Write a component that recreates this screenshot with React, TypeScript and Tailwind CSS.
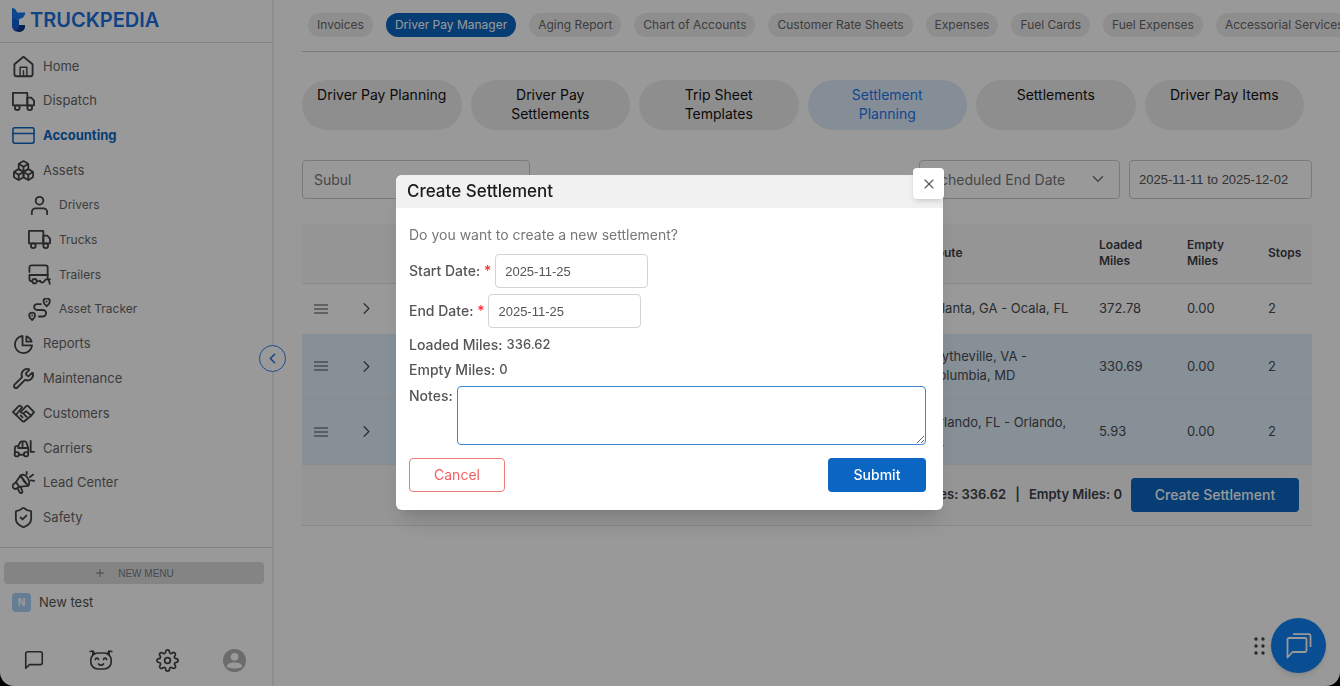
import React from 'react'
import { Boxes, ChevronDown, ChevronLeft, ChevronRight, Plus, ShieldCheck, Wrench, X } from 'lucide-react'
import { FiCreditCard, FiMessageSquare, FiSettings, FiTruck, FiUser } from 'react-icons/fi'
import { HiOutlineChartPie } from 'react-icons/hi'

type IconProps = { className?: string }

const strokeProps = {
  viewBox: '0 0 24 24',
  fill: 'none',
  stroke: 'currentColor',
  strokeWidth: 1.7,
  strokeLinecap: 'round' as const,
  strokeLinejoin: 'round' as const,
}

function HomeIcon({ className }: IconProps) {
  return (
    <svg {...strokeProps} className={className}>
      <path d="M2.5 9.6 12 1.8l9.5 7.8v10.6a2 2 0 0 1-2 2h-15a2 2 0 0 1-2-2z" />
      <path d="M8.5 22v-9.2h7V22M12 16.5V22" strokeWidth="1.5" />
    </svg>
  )
}

function TrailerIcon({ className }: IconProps) {
  return (
    <svg {...strokeProps} className={className}>
      <path d="M1.5 9.5v-5a2 2 0 0 1 2-2h15a2 2 0 0 1 2 2V17" />
      <path d="M1.5 12.5h19M1.5 12.5V17a2 2 0 0 0 2 2h.8M9.5 19h3" />
      <circle cx="6.8" cy="19" r="2.3" />
      <path d="M12.5 18.5a2.3 2.3 0 0 0 4.2.8l2-2.3h4.3M21.5 17l1.2 4.8" />
    </svg>
  )
}

function TrackerIcon({ className }: IconProps) {
  return (
    <svg {...strokeProps} className={className}>
      <path d="M19.5 8.6s-3.3-2.6-3.3-5a3.3 3.3 0 0 1 6.6 0c0 2.4-3.3 5-3.3 5z" />
      <path d="M4.3 23s-3.1-2.4-3.1-4.7a3.1 3.1 0 0 1 6.2 0c0 2.3-3.1 4.7-3.1 4.7z" />
      <path d="M13.5 6.3h-4a3.1 3.1 0 0 0 0 6.2h6a3.4 3.4 0 0 1 0 6.8h-4.2" />
      <path d="M19.5 3.6v.1M4.3 18.2v.1" />
    </svg>
  )
}

function HandshakeIcon({ className }: IconProps) {
  return (
    <svg {...strokeProps} className={className}>
      <path d="m1 10.5 6-6.2a1.5 1.5 0 0 1 2.1 0l1.4 1.4-6.3 7.8z" />
      <path d="m23 10.5-6-6.2a1.5 1.5 0 0 0-2.1 0L9 10.2c.8 2 3 1.8 4.2.6l1.5-1.3 5.3 4.7z" />
      <path d="m4.2 13.5 6.3 6.3a2 2 0 0 0 2.8 0l6.5-5.5M9 14l2 2M12.2 12.5l3 3" />
    </svg>
  )
}

function ForkliftIcon({ className }: IconProps) {
  return (
    <svg {...strokeProps} className={className}>
      <path d="M3 16.5V11a1.5 1.5 0 0 1 1.5-1.5h2L8.500 5.500A1.500 1.500 0 0 1 10 4.500h3.500a1.500 1.500 0 0 1 1.400 1l2.100 6v5" />
      <path d="M6.500 9.500v2h9.800M11 5v6.500M7.500 18.500h4.800" />
      <circle cx="5" cy="18" r="2.3" />
      <circle cx="14.7" cy="18" r="2.3" />
      <path d="M19.500 4v11.500h3.500" />
    </svg>
  )
}

function MegaphoneIcon({ className }: IconProps) {
  return (
    <svg {...strokeProps} className={className}>
      <path d="M8.800 4.800 16.800 15.500l-9.300 1-2.200 1.600a2.700 2.700 0 0 1-3.500-4.600l2.300-1.700z" />
      <path d="M8.800 4.800c2.200-1.700 5.200-.7 7.200 2s2.900 6.900.8 8.700" />
      <path d="m4.300 11.800 3.200 4.700M11.200 8.600l2.200 3.500M5.800 18l2.200 4.300a1.500 1.500 0 0 0 2.700-1.400L9 16.500" />
      <path d="M15.300 1v2.300M18.700 6.300l3.300-2.500M19.500 9.800l3.500.6" />
    </svg>
  )
}

function BotIcon({ className }: IconProps) {
  return (
    <svg {...strokeProps} className={className}>
      <rect x="1.8" y="5" width="20.4" height="16" rx="7" />
      <path d="M1.200 3.500 4 3l1.500 3M4 3l-.2 3.500M22.800 3.500 20 3l-1.500 3M20 3l.2 3.500" />
      <path d="M6.300 11.500c.4-1.800 2.800-1.800 3.200 0M14.500 11.500c.4-1.800 2.800-1.800 3.200 0M9.500 16c1 1.500 4 1.500 5 0" />
    </svg>
  )
}

function AvatarIcon({ className }: IconProps) {
  return (
    <svg viewBox="0 0 24 24" className={className}>
      <circle cx="12" cy="12" r="12" fill="#b4b4b4" />
      <circle cx="12" cy="8.2" r="4" fill="#fff" />
      <path d="M4 18.500c0-3.200 4-4.500 8-4.500s8 1.300 8 4.500c-1.800 1.200-4.500 1.800-8 1.800s-6.200-.6-8-1.800z" fill="#fff" />
    </svg>
  )
}

function LogoMark({ className }: IconProps) {
  return (
    <svg viewBox="0 0 14 24" className={className}>
      <path d="M0 9c2 2 4.500 2.500 7 2v7c0 3-1.500 5.500-3.500 5.300C1.500 22.500 0 20.500 0 18z" fill="#1260d8" />
      <path d="M0 0c2.500 0 4.600 1.800 5 4.500h8.300c-.2 3.600-2.500 6.200-6.300 6.500H0z" fill="#1677ee" />
      <path d="M7 17h6v1.500c0 3.200-2.600 5.500-5.800 5.500C5.500 24 4 23.500 3 22.800 5.500 22 7 20 7 17z" fill="#083a8c" />
    </svg>
  )
}

const menu = [
  { label: 'Home', icon: HomeIcon },
  { label: 'Dispatch', icon: FiTruck },
  { label: 'Accounting', icon: FiCreditCard, active: true },
  { label: 'Assets', icon: Boxes },
  { label: 'Drivers', icon: FiUser, sub: true },
  { label: 'Trucks', icon: FiTruck, sub: true },
  { label: 'Trailers', icon: TrailerIcon, sub: true },
  { label: 'Asset Tracker', icon: TrackerIcon, sub: true },
  { label: 'Reports', icon: HiOutlineChartPie },
  { label: 'Maintenance', icon: Wrench },
  { label: 'Customers', icon: HandshakeIcon },
  { label: 'Carriers', icon: ForkliftIcon },
  { label: 'Lead Center', icon: MegaphoneIcon },
  { label: 'Safety', icon: ShieldCheck },
]

const tabs = [
  'Invoices',
  'Driver Pay Manager',
  'Aging Report',
  'Chart of Accounts',
  'Customer Rate Sheets',
  'Expenses',
  'Fuel Cards',
  'Fuel Expenses',
  'Accessorial Services',
]

const subTabs = [
  { label: 'Driver Pay Planning' },
  { label: 'Driver Pay Settlements', wrap: true },
  { label: 'Trip Sheet Templates', wrap: true },
  { label: 'Settlement Planning', wrap: true, active: true },
  { label: 'Settlements' },
  { label: 'Driver Pay Items' },
]

const rows = [
  { route: 'Atlanta, GA - Ocala, FL', loaded: '372.78', empty: '0.00', stops: 2, selected: false },
  { route: 'Wytheville, VA - Columbia, MD', loaded: '330.69', empty: '0.00', stops: 2, selected: true },
  { route: 'Orlando, FL - Orlando, FL', loaded: '5.93', empty: '0.00', stops: 2, selected: true },
]

function Sidebar() {
  return (
    <aside className="relative flex w-[274px] shrink-0 flex-col border-r-2 border-[#ececec]">
      <a href="#home" className="flex h-[43px] items-center gap-1 border-b border-[#dcdcdc] pb-[3px] pl-3">
        <LogoMark className="h-6 w-[14px]" />
        <span className="text-xl font-semibold text-[#1a70e0]">TRUCKPEDIA</span>
      </a>

      <nav className="flex min-h-0 flex-1 flex-col border-b border-[#dcdcdc] pt-[6px] pb-3">
        {menu.map(({ label, icon: Icon, active, sub }) => (
          <a
            key={label}
            href="#menu"
            className={`flex flex-1 items-center gap-2 ${sub ? 'pl-7 text-xs' : 'pl-3 text-[13px]'} ${
              active ? 'font-bold text-[#0a66c2]' : 'text-[#666]'
            }`}
          >
            <Icon className={`size-[23px] ${active ? 'stroke-[1.6]' : 'stroke-[1.9] text-[#444]'}`} />
            <span>{label}</span>
          </a>
        ))}
      </nav>

      <div className="flex h-[138px] flex-col">
        <button className="mt-[14px] mr-2 ml-1 flex h-[22px] items-center justify-center gap-3 rounded bg-[#dcdcdc] font-['Liberation_Sans',sans-serif] text-[10px] text-[#777c85]">
          <Plus size={12} />
          NEW MENU
        </button>
        <a href="#new-test" className="mt-[9px] ml-3 flex items-center gap-2 text-[13px] text-[#555]">
          <span className="flex size-[19px] items-center justify-center rounded bg-[#a9d3f7] text-[10px] font-bold text-white">N</span>
          New test
        </a>
        <div className="mt-auto mb-[14px] grid grid-cols-4 items-center justify-items-center pr-1 text-[#444]">
          <button aria-label="Messages"><FiMessageSquare className="size-[22px] stroke-[1.8]" /></button>
          <button aria-label="Assistant"><BotIcon className="size-6" /></button>
          <button aria-label="Settings"><FiSettings className="size-[23px] stroke-[1.8]" /></button>
          <button aria-label="Profile"><AvatarIcon className="size-[23px]" /></button>
        </div>
      </div>

      {/* Collapse handle sits on the border */}
      <button
        aria-label="Collapse sidebar"
        className="absolute top-[345px] -right-[14px] flex size-[27px] items-center justify-center rounded-full border border-[#2f80ed] bg-white text-[#1a70e0]"
      >
        <ChevronLeft size={17} />
      </button>
    </aside>
  )
}

function TripsTable() {
  return (
    <table className="mt-[25px] w-full table-fixed border-collapse text-left text-[13px] text-[#484b50]">
      <colgroup>
        <col className="w-10" />
        <col className="w-12" />
        <col />
        <col className="w-[170px]" />
        <col className="w-[88px]" />
        <col className="w-[81px]" />
        <col className="w-14" />
      </colgroup>
      <thead className="bg-[#f8f8f8] text-xs text-[#3c4048]">
        <tr className="h-[59px] border-b border-[#e4e4e4]">
          <th />
          <th />
          <th />
          <th className="px-3 font-semibold">Route</th>
          <th className="px-3 font-semibold">Loaded<br />Miles</th>
          <th className="px-3 font-semibold">Empty<br />Miles</th>
          <th className="px-3 font-semibold">Stops</th>
        </tr>
      </thead>
      <tbody>
        {rows.map((row) => (
          <tr key={row.route} className={row.selected ? 'h-[65px] border-b border-[#dfe9f2] bg-[#e1effc]' : 'h-[51px]'}>
            <td className="pl-3">
              <svg viewBox="0 0 14 10" className="h-[10px] w-[14px]" fill="none" stroke="currentColor" strokeWidth="1.2">
                <path d="M0 1h14M0 5h14M0 9h14" />
              </svg>
            </td>
            <td className="pl-[15px]">
              <button aria-label="Expand row" className="flex"><ChevronRight size={19} strokeWidth={1.5} /></button>
            </td>
            <td />
            <td className="px-3 leading-[19px]">{row.route}</td>
            <td className="px-3">{row.loaded}</td>
            <td className="px-3">{row.empty}</td>
            <td className="px-3">{row.stops}</td>
          </tr>
        ))}
      </tbody>
      <tfoot className="bg-[#f8f8f8]">
        <tr className="h-[61px] border-b border-[#e4e4e4]">
          <td colSpan={7} className="pr-[13px]">
            <div className="flex items-center justify-end gap-[9px] font-semibold text-[#3c4048]">
              <span>Loaded Miles: 336.62</span>
              <span>|</span>
              <span>Empty Miles: 0</span>
              <button className="h-[34px] w-[168px] rounded bg-[#0a66c2] text-sm font-medium text-white">Create Settlement</button>
            </div>
          </td>
        </tr>
      </tfoot>
    </table>
  )
}

function SettlementModal() {
  return (
    <div className="fixed inset-0 flex items-center justify-center bg-black/40 pr-px pb-px">
      <div
        role="dialog"
        aria-labelledby="modal-title"
        className="relative w-[547px] rounded-md bg-white text-sm text-[#555] shadow-xl"
      >
        <h2 id="modal-title" className="rounded-t-md bg-[#f1f1f1] px-[11px] text-[17px] leading-[33px] font-medium text-[#1c1c1c]">
          Create Settlement
        </h2>
        <button
          aria-label="Close"
          className="absolute -top-[7px] -right-px flex size-[31px] items-center justify-center rounded bg-white text-[#555] shadow-md"
        >
          <X size={16} strokeWidth={1.7} />
        </button>

        <form className="pt-[14px] pr-[17px] pb-[18px] pl-[13px]">
          <p className="leading-[25px] text-[#777]">Do you want to create a new settlement?</p>
          <div className="mt-[7px] flex items-center gap-1 font-medium">
            <label htmlFor="start">Start Date: <span className="text-red-500">*</span></label>
            <input
              id="start"
              defaultValue="2025-11-25"
              className="h-[34px] w-[153px] rounded border border-[#d4d4d4] px-[9px] font-['Liberation_Sans',sans-serif] text-[13px] font-normal"
            />
          </div>
          <div className="mt-[6px] flex items-center gap-1 font-medium">
            <label htmlFor="end">End Date: <span className="text-red-500">*</span></label>
            <input
              id="end"
              defaultValue="2025-11-25"
              className="h-[34px] w-[153px] rounded border border-[#d4d4d4] px-[9px] font-['Liberation_Sans',sans-serif] text-[13px] font-normal"
            />
          </div>
          <p className="mt-1 flex gap-1 leading-[25px] font-medium">
            <span>Loaded Miles:</span><span className="text-[13px]">336.62</span>
          </p>
          <p className="flex gap-1 leading-[25px] font-medium">
            <span>Empty Miles:</span><span className="text-[13px]">0</span>
          </p>
          <div className="mt-1 flex gap-1 font-medium">
            <label htmlFor="notes">Notes:</label>
            <textarea id="notes" className="h-[59px] flex-1 resize rounded border border-[#3f86d0] outline-none" />
          </div>
          <div className="mt-[13px] flex justify-between">
            <button type="button" className="h-[34px] w-[96px] rounded border border-[#f27a7a] text-[#ee5f62]">Cancel</button>
            <button type="button" className="h-[34px] w-[98px] rounded bg-[#0a66c2] font-medium text-white">Submit</button>
          </div>
        </form>
      </div>
    </div>
  )
}

export default function App() {
  return (
    <div className="h-screen bg-black font-[Inter,sans-serif]">
      <div className="flex h-full overflow-hidden rounded-b-[14px] bg-white">
        <Sidebar />

        <main className="min-w-0 flex-1 pl-7">
          <div className="flex h-[52px] gap-[13px] overflow-hidden border-b border-[#ccc] pt-[13px] pl-[6px]">
            {tabs.map((tab) => (
              <button
                key={tab}
                className={`h-6 shrink-0 rounded-full px-[9px] text-xs ${
                  tab === 'Driver Pay Manager' ? 'bg-[#0a66c2] text-white' : 'bg-[#ededed] text-[#666]'
                }`}
              >
                {tab}
              </button>
            ))}
          </div>

          <div className="pr-[28px]">
            <div className="mt-[28px] grid grid-cols-6 gap-[9px] pr-2">
              {subTabs.map(({ label, wrap, active }) => (
                <button
                  key={label}
                  className={`flex h-[50px] justify-center rounded-full pt-[5px] text-sm leading-[19px] ${
                    wrap ? 'px-8' : 'px-3'
                  } ${active ? 'bg-[#deebfc] text-[#2079f0]' : 'bg-[#ededed] text-[#111]'}`}
                >
                  {label}
                </button>
              ))}
            </div>

            <div className="mt-[30px] flex gap-[9px] text-sm text-[#777]">
              <input
                aria-label="Driver"
                defaultValue="Subul"
                className="mr-auto h-[39px] w-[228px] rounded border border-[#ccc] px-[11px]"
              />
              <div className="relative w-[201px]">
                <select aria-label="Date type" className="h-[39px] w-full appearance-none rounded border border-[#ccc] px-[11px]">
                  <option>Scheduled End Date</option>
                </select>
                <ChevronDown size={18} className="pointer-events-none absolute top-[10px] right-[13px]" />
              </div>
              <input
                aria-label="Date range"
                defaultValue="2025-11-11 to 2025-12-02"
                className="h-[39px] w-[183px] rounded border border-[#ccc] px-[9px] font-['Liberation_Sans',sans-serif] text-[13px] text-[#555]"
              />
            </div>

            <TripsTable />
          </div>
        </main>
      </div>

      {/* Draggable chat launcher */}
      <div className="fixed right-[14px] bottom-[13px] flex items-center gap-[6px]">
        <svg viewBox="0 0 11 18" className="h-[18px] w-[11px]" fill="#444">
          <circle cx="2" cy="2" r="1.7" /><circle cx="9" cy="2" r="1.7" />
          <circle cx="2" cy="9" r="1.7" /><circle cx="9" cy="9" r="1.7" />
          <circle cx="2" cy="16" r="1.7" /><circle cx="9" cy="16" r="1.7" />
        </svg>
        <button aria-label="Open chat" className="flex size-[55px] items-center justify-center rounded-full bg-[#0f80f5] text-white shadow-md">
          <svg viewBox="0 0 26 26" className="size-[26px]" fill="none" stroke="currentColor" strokeWidth="1.8" strokeLinejoin="round">
            <path d="M1.5 24.5V6.500a1.500 1.500 0 0 1 1.500-1.500h16a1.500 1.500 0 0 1 1.500 1.500v11a1.500 1.500 0 0 1-1.500 1.500H6.500z" />
            <path d="M7 1.200h15.500a2 2 0 0 1 2 2V14" />
          </svg>
        </button>
      </div>

      <SettlementModal />
    </div>
  )
}
